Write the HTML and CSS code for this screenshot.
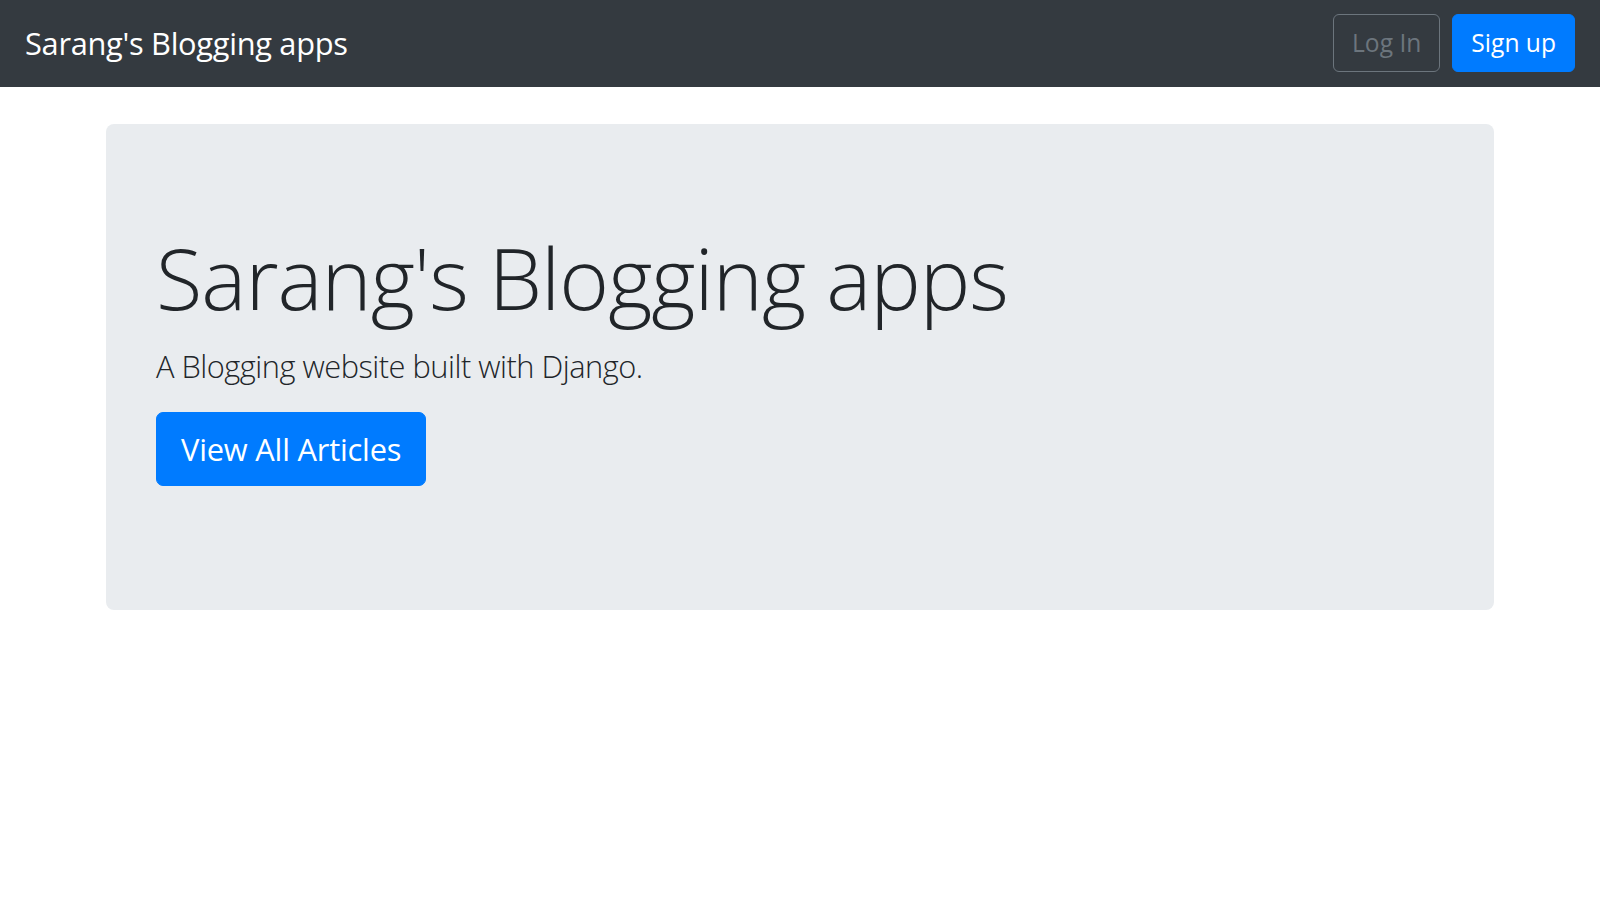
FILE: index.html
```html
<!DOCTYPE html>
<html lang="en">
<head>
<meta charset="utf-8">
<title>Sarang's Blogging apps</title>
<link rel="stylesheet" href="styles.css">
</head>
<body>
<nav class="navbar">
  <a class="brand" href="#">Sarang's Blogging apps</a>
  <div class="nav-actions">
    <a class="btn btn-outline" href="#">Log In</a>
    <a class="btn btn-primary" href="#">Sign up</a>
  </div>
</nav>
<main class="container">
  <section class="jumbotron">
    <h1 class="display">Sarang's Blogging apps</h1>
    <p class="lead">A Blogging website built with Django.</p>
    <p class="cta"><a class="btn btn-primary btn-lg" href="#">View All Articles</a></p>
  </section>
</main>
</body>
</html>
```

FILE: styles.css
```css
* { box-sizing: border-box; }
html, body { margin: 0; padding: 0; }
body {
  font-family: "Open Sans", "Noto Sans", "Liberation Sans", sans-serif;
  font-size: 24.6px;
  line-height: 1.5;
  color: #212529;
  background: #ffffff;
}
a { text-decoration: none; }

.navbar {
  height: 87px;
  background: #343a40;
  display: flex;
  align-items: center;
  justify-content: space-between;
  padding: 0 25px 0 25px;
}
.brand {
  color: #ffffff;
  font-size: 30.8px;
  line-height: 1.5;
  letter-spacing: -0.3px;
  white-space: nowrap;
}
.nav-actions {
  display: flex;
  gap: 12px;
  align-items: center;
  margin-top: -1px;
}
.btn {
  display: inline-block;
  border: 1px solid transparent;
  border-radius: 6px;
  padding: 9px 18px;
  font-size: 24.6px;
  line-height: 38px;
  white-space: nowrap;
  text-align: center;
}
.btn-outline {
  color: #6c757d;
  border-color: #6c757d;
}
.btn-primary {
  color: #ffffff;
  background: #007bff;
  border-color: #007bff;
}
.btn-lg {
  font-size: 30.8px;
  line-height: 46px;
  padding: 13px 24px;
  border-radius: 7px;
  letter-spacing: -0.2px;
}

.container {
  width: 1388px;
  margin: 37px auto 0;
}
.jumbotron {
  background: #e9ecef;
  border-radius: 8px;
  padding: 101px 50px 99px 50px;
}
.display {
  margin: 0 0 14px;
  font-size: 85px;
  font-weight: 300;
  line-height: 104px;
  letter-spacing: -1px;
  white-space: nowrap;
}
.lead {
  margin: 0 0 23px;
  font-size: 30.8px;
  font-weight: 300;
  line-height: 46px;
  letter-spacing: -0.5px;
}
.cta {
  margin: 0 0 25px;
  line-height: 0;
}
```
